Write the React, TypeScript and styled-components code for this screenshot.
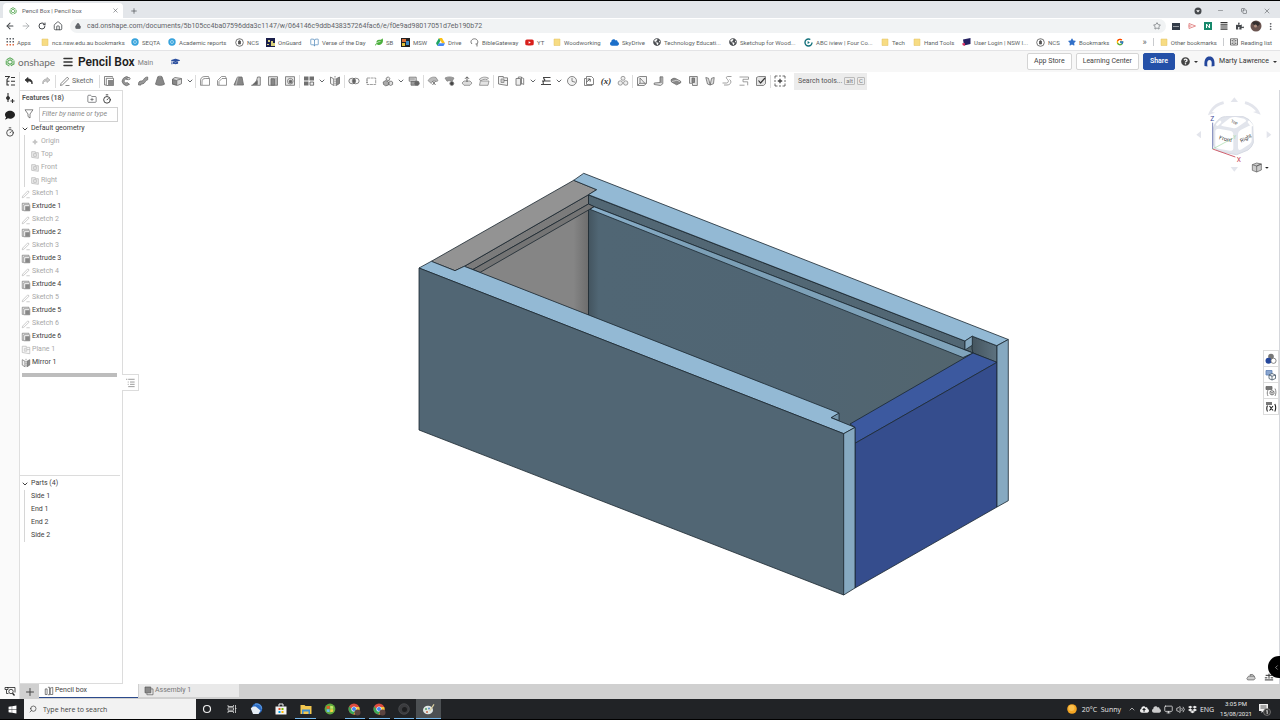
import React from "react";
import styled, { createGlobalStyle, css } from "styled-components";
import {
  ArrowLeft,
  ArrowRight,
  RotateCw,
  House,
  Lock,
  Star,
  EllipsisVertical,
  Plus,
  X,
  Minus,
  Copy,
  Search,
  ChevronDown,
  ChevronLeft,
  ChevronUp,
  Timer,
  FolderPlus,
  Menu,
  Monitor,
  Volume2,
  BookOpen,
} from "lucide-react";
import {
  FaWindows,
  FaDropbox,
  FaCloud,
  FaCloudUploadAlt,
  FaPuzzlePiece,
  FaGlobeAmericas,
  FaGraduationCap,
  FaStar,
  FaLeaf,
  FaQuestionCircle,
  FaYoutube,
  FaComment,
} from "react-icons/fa";
import { FcGoogle } from "react-icons/fc";

const ui = `Roboto, "Liberation Sans", sans-serif`;
const system = `"Open Sans", "Noto Sans", sans-serif`;

const Global = createGlobalStyle`
  *, *::before, *::after { box-sizing: border-box; }
  body { margin: 0; background: #fff; font-family: ${ui}; font-size: 7px; line-height: 9px; color: #333; }
  button, input { font: inherit; color: inherit; margin: 0; padding: 0; border: 0; background: none; }
  a { color: inherit; text-decoration: none; }
  ul { list-style: none; margin: 0; padding: 0; }
  h1, h2 { margin: 0; font-size: inherit; font-weight: inherit; }
  svg { display: block; flex: none; }
`;

const Page = styled.div`
  display: flex;
  flex-direction: column;
  min-height: 100vh;
  border-top: 1px solid #000;
`;

/* ---------- browser chrome ---------- */

const TabStrip = styled.div`
  display: flex;
  align-items: stretch;
  height: 17px;
  padding: 2px 2px 0 3px;
  background: #e3e6ea;
  font-size: 6px;
  color: #5f6368;
`;
const BrowserTab = styled.div`
  display: flex;
  align-items: center;
  gap: 5px;
  width: 120px;
  padding: 0 4px 0 6px;
  background: #fff;
  border-radius: 4px 4px 0 0;
  span { flex: 1; }
`;
const IconCell = styled.button<{ $w?: number; $c?: string }>`
  display: flex;
  flex: none;
  align-items: center;
  justify-content: center;
  width: ${(p) => p.$w ?? 16}px;
  color: ${(p) => p.$c ?? "#45484c"};
`;
const Spacer = styled.div`
  flex: 1;
`;
const AddressBar = styled.div`
  display: flex;
  align-items: stretch;
  height: 16px;
  padding: 0 4px 0 2px;
`;
const Omnibox = styled.label`
  display: flex;
  flex: 1;
  align-items: center;
  gap: 6px;
  margin: 1px 2px 1px 4px;
  padding: 0 5px;
  border-radius: 7px;
  background: #f1f3f4;
  color: #5f6368;
  input { flex: 1; outline: 0; }
`;
const Bookmarks = styled.nav`
  display: flex;
  align-items: center;
  height: 17px;
  padding: 0 8px 0 6px;
  border-bottom: 1px solid #e4e4e6;
  font-size: 6px;
  color: #5c5f63;
`;
const Bookmark = styled.a<{ $w?: number }>`
  display: flex;
  flex: none;
  align-items: center;
  gap: 3px;
  width: ${(p) => (p.$w ? p.$w + "px" : "auto")};
  white-space: nowrap;
`;
const More = styled.button`
  font-size: 9px;
`;
const Thin = styled.i`
  width: 1px;
  height: 8px;
  margin: 0 6px;
  background: #c9cbce;
`;

/* ---------- application header ---------- */

const Header = styled.header`
  display: flex;
  align-items: center;
  height: 21px;
  padding: 0 3px 0 5px;
  background: #f7f7f7;
`;
const Brand = styled.a`
  display: flex;
  align-items: center;
  gap: 3px;
  width: 57px;
  font: 10px/12px Lato, sans-serif;
  color: #6a6a6a;
`;
const DocTitle = styled.h1`
  margin-left: 5px;
  font-size: 12px;
  line-height: 14px;
  font-weight: 600;
  color: #1d1d1d;
`;
const Branch = styled.span`
  margin: 3px 18px 0 3px;
  color: #808080;
`;
const HeaderButton = styled.button<{ $primary?: boolean }>`
  height: 17px;
  margin-right: 4px;
  padding: 0 6px;
  border: 1px solid #d4d4d4;
  border-radius: 2px;
  background: #fff;
  color: #444;
  ${(p) =>
    p.$primary &&
    css`
      border-color: #2450a8;
      background: #2450a8;
      color: #fff;
      font-weight: 600;
    `}
`;
const MenuButton = styled.button`
  display: flex;
  align-items: center;
  gap: 4px;
  margin-left: 2px;
  & + & { margin-left: 6px; }
`;
const Caret = styled.i`
  border: 2px solid transparent;
  border-top-color: #333;
  border-bottom: 0;
`;

/* ---------- workspace ---------- */

const Workspace = styled.div`
  display: flex;
  flex: 1;
`;
const Rail = styled.nav`
  display: flex;
  flex-direction: column;
  width: 20px;
  border-right: 1px solid #dfdfdf;
  background: #fafafa;
  button { height: 17px; }
`;
const Stage = styled.div`
  display: flex;
  flex: 1;
  flex-direction: column;
  min-width: 0;
`;
const Toolbar = styled.div`
  display: flex;
  align-items: center;
  height: 18px;
  button { height: 17px; }
`;
const Sep = styled.i`
  width: 2px;
  height: 13px;
  border-right: 1px solid #dcdcdc;
`;
const SketchButton = styled.button`
  display: flex;
  align-items: center;
  gap: 1px;
  width: 42px;
  padding-left: 3px;
  color: #666;
`;
const ToolSearch = styled.button`
  display: flex;
  align-items: center;
  gap: 2px;
  margin-left: 6px;
  padding: 0 2px 0 4px;
  background: #ececec;
  color: #555;
  kbd {
    padding: 0 1px;
    border: 1px solid #bbb;
    border-radius: 1px;
    font: 6px/6px ${ui};
    color: #777;
  }
`;
const Middle = styled.div`
  display: flex;
  flex: 1;
`;
const Panel = styled.aside`
  display: flex;
  flex-direction: column;
  width: 103px;
  border: 1px solid #dcdcdc;
  border-left: 0;
`;
const PanelHead = styled.div`
  display: flex;
  align-items: center;
  height: 15px;
  padding: 0 8px 0 2px;
  h2 { flex: 1; font-weight: 600; color: #555; }
`;
const Filter = styled.label`
  display: flex;
  align-items: center;
  gap: 4px;
  height: 16px;
  padding: 0 4px 0 3px;
  input {
    flex: 1;
    min-width: 0;
    height: 15px;
    padding: 0 2px;
    border: 1px solid #d0d0d0;
    font-style: italic;
  }
  input::placeholder { color: #8c8c8c; opacity: 1; }
`;
const Tree = styled.ul<{ $nested?: boolean }>`
  ${(p) =>
    p.$nested &&
    css`
      margin-left: 4px;
      border-left: 1px solid #d6d6d6;
    `}
`;
const Row = styled.button<{ $dim?: boolean; $indent?: number; $gap?: number }>`
  display: flex;
  align-items: center;
  gap: ${(p) => p.$gap ?? 2}px;
  width: 100%;
  height: 13px;
  padding-left: ${(p) => p.$indent ?? 1}px;
  color: ${(p) => (p.$dim ? "#a8a8a8" : "#404040")};
`;
const Rollback = styled.div`
  height: 4px;
  margin: 4px 5px 0 2px;
  background: #bdbdbd;
`;
const PartsSection = styled.section`
  height: 208px;
  padding-top: 1px;
  margin-right: 2px;
  border-top: 1px solid #dcdcdc;
`;
const Canvas = styled.main`
  position: relative;
  display: flex;
  flex: 1;
  border-right: 1px solid #d5d7dc;
`;
const Model = styled.svg`
  flex: 1;
  min-width: 0;
  width: 100%;
`;
const ListToggle = styled.button`
  position: absolute;
  top: 284px;
  left: -1px;
  display: flex;
  align-items: center;
  justify-content: center;
  width: 17px;
  height: 17px;
  border: 1px solid #dcdcdc;
  border-left: 0;
  background: #fff;
`;
const CubeHolder = styled.div`
  position: absolute;
  top: 0;
  right: -1px;
`;
const SideTabs = styled.div`
  position: absolute;
  top: 260px;
  right: 0;
  display: flex;
  flex-direction: column;
  button {
    width: 16px;
    height: 16px;
    border: 1px solid #dcdcdc;
    border-bottom: 0;
  }
  button:last-child { height: 17px; border-bottom: 1px solid #dcdcdc; }
`;
const Measures = styled.div`
  position: absolute;
  right: 5px;
  bottom: 2px;
  display: flex;
  gap: 8px;
`;
const Drawer = styled.button`
  position: absolute;
  right: -1px;
  bottom: 6px;
  width: 12px;
  height: 22px;
  border-radius: 11px 0 0 11px;
  background: #000;
  color: #ddd;
  display: flex;
  align-items: center;
  justify-content: flex-end;
`;
const SheetTabs = styled.div`
  display: flex;
  height: 15px;
  background: #d0d0d0;
`;
const SheetTab = styled.button<{ $active?: boolean; $w: number }>`
  display: flex;
  align-items: center;
  gap: 1px;
  width: ${(p) => p.$w}px;
  height: 14px;
  padding-left: 5px;
  margin-right: 1px;
  background: ${(p) => (p.$active ? "#fff" : "#e9e9e9")};
  border-bottom: 1px solid ${(p) => (p.$active ? "#2b4a8c" : "#d0d0d0")};
  color: ${(p) => (p.$active ? "#444" : "#777")};
`;

/* ---------- taskbar ---------- */

const Taskbar = styled.footer`
  display: flex;
  height: 21px;
  border-bottom: 1px solid #000;
  background: #212326;
  color: #e8e8e8;
  font-family: ${system};
`;
const TaskSearch = styled.label`
  display: flex;
  align-items: center;
  gap: 6px;
  width: 172px;
  margin-right: -1px;
  padding-left: 5px;
  background: #f2f2f2;
  color: #333;
  input { flex: 1; min-width: 0; }
  input::placeholder { color: #444; opacity: 1; }
`;
const MirroredSearch = styled(Search)`
  transform: scaleX(-1);
`;
const Apps = styled.div`
  display: flex;
  width: 246px;
`;
const AppButton = styled.button<{ $open?: boolean; $active?: boolean }>`
  display: flex;
  flex: 1;
  align-items: center;
  justify-content: center;
  background: ${(p) => (p.$active ? "#4c5053" : "none")};
  box-shadow: ${(p) =>
    p.$active
      ? "inset 0 -1px #76b9ed"
      : p.$open
        ? "inset 2px 0 #212326, inset -2px 0 #212326, inset 0 -1px #76b9ed"
        : "none"};
`;
const Weather = styled.button`
  display: flex;
  align-items: center;
  gap: 5px;
  margin-right: 5px;
  white-space: pre;
`;
const Clock = styled.time`
  width: 40px;
  align-self: center;
  font: 6px/10px ${ui};
  text-align: center;
`;

/* ---------- drawings ---------- */

type P = { children: React.ReactNode; s?: number; c?: string };
const G = ({ children, s = 12, c = "#6a6a6a" }: P) => (
  <svg width={s} height={s} viewBox="0 0 12 12" fill="none" stroke={c} strokeWidth=".8" strokeLinejoin="round" aria-hidden>
    {children}
  </svg>
);

const I = {
  undo: <G c="#333"><path d="M5 2.500 2 5l3 2.500V6c2.500-.2 3.700.6 4 3 .8-3-.8-5-4-5z" fill="#333" /></G>,
  redo: <G c="#aaa"><path d="M7 2.500 10 5 7 7.500V6c-2.500-.2-3.700.6-4 3-.8-3 .8-5 4-5z" fill="#ccc" /></G>,
  pencil: <G><path d="M2 8.500 8.200 2.200l1.600 1.500L3.500 9.800 1.500 10.500zM6.500 10.500h4" /></G>,
  extrude: <G><path d="M9.500 2.500V1.500h-8v8.500H3" /><path d="M3.300 3.300h7.200v7.200H3.300z" fill="#fff" /><path d="M5 5h5.500v5.500H5z" fill="#888" stroke="none" /></G>,
  revolve: <G><path d="M9.500 3A4.300 4.300 0 1 0 9.500 9.300L7.200 7.500A1.900 1.900 0 1 1 7.200 4.600z" fill="#999" /><ellipse cx="8.500" cy="3.700" rx="1.700" ry="1" fill="#e4e4e4" /></G>,
  sweep: <G><path d="M1.500 10c0-3 .5-4 3-4s2-4 6.200-4v2.800C8 4.800 8.500 9 5 9 4 9 4 9 4 10z" fill="#999" /></G>,
  loft: <G><path d="M3.800 1.800h4.200l2.500 7.400c-2 1.500-7 1.500-9 0z" fill="#888" /><ellipse cx="6" cy="2" rx="2" ry=".8" fill="#e4e4e4" /></G>,
  thicken: <G><path d="M1.500 4 4 2.500l6.500 1v5.200L6.500 10.500l-5-1.300z" fill="#ddd" /><path d="M1.500 4.500 5.800 5.500v4.500l-4.300-1z" fill="#888" /><path d="m6 5.200 4.500-1.400" /></G>,
  fillet: <G><path d="M1.500 10.300V6c0-3 1.500-4.500 4.500-4.500h3.500L10.500 4v6.300zM3 10V7c0-2.300 1-3.500 3.300-3.500h4" strokeWidth=".7" /></G>,
  chamfer: <G><path d="M1.500 10.300V5.500l4-4h4l1 2.500v6.300zM3 10V6.500l3-3h4.400" strokeWidth=".7" /></G>,
  draft: <G><path d="m1 10 3.500-8H9l1.500 8z" fill="#888" /><path d="M5 2 3 10" stroke="#ccc" /></G>,
  rib: <G><path d="M7.500 2h2.800v8.300H1.500c3-.8 5-3.300 6-8.300z" fill="#ddd" /><path d="m3 9.500 4.300-4v4z" fill="#666" /></G>,
  shell: <G><path d="M1.500 1.700h9v8.600h-9z" fill="#e8e8e8" /><path d="M4 3.700h3.500v6.500H4z" fill="#888" /><path d="M9 3v7" /></G>,
  hole: <G><path d="M1.500 1.700h9v8.600h-9z" fill="#e8e8e8" /><circle cx="6.300" cy="6.200" r="2.800" fill="#fff" /><circle cx="6.500" cy="6.500" r="1.500" fill="#666" /></G>,
  pattern: <G c="#555"><path d="M1 1.500h4.500v4H1zM6.500 1.500H11v4H6.500zM1 6.500h4.500v4H1z" fill="#707070" stroke="none" /><path d="M7 7h3.600v3.200H7z" fill="#eee" /></G>,
  mirror: <G><path d="m1.500 2 3.200 1.800v6.700L1.500 8.500z" fill="#f2f2f2" /><path d="M6 1v10" strokeDasharray="1.500 .8" /><path d="M7.300 3.800 10.500 2v6.500l-3.200 2z" fill="#888" /></G>,
  boolean: <G><ellipse cx="4.300" cy="6" rx="3.500" ry="2.800" fill="#eee" /><ellipse cx="7.700" cy="6" rx="3.500" ry="2.800" /><path d="M6 3.700c1.300 1 1.300 3.600 0 4.600-1.300-1-1.300-3.600 0-4.600z" fill="#444" /></G>,
  split: <G><path d="M2 3h8.700v6.500H2zM1 5h2M1 7.500h2" strokeDasharray="3 .6" stroke="#888" /></G>,
  transform: <G><path d="m4 3.300 2.300-1.500 1.500 1.500L7 5.800 4.500 5z" fill="#eee" /><path d="m1.200 7 2.600-1.500L6.500 7v3L3.700 10.800 1.500 9.500z" fill="#aaa" /><path d="m7 7 2-1 1.600 1v2.500L8.500 10.500 7 9.500z" fill="#ddd" /></G>,
  remove: <G><path d="M1.200 2.200h7v4h-7z" fill="#e4e4e4" /><path d="M1.500 4h5.300M3 6.500h5v3.700H3z" fill="#999" /><circle cx="9" cy="8.300" r="2.200" fill="#666" /></G>,
  faceMod: <G c="#888"><path d="M1 5.500C3 2.500 6 1.500 9 2.500l2 3.300-2 .7C7 4.800 5.500 6 4.300 8.500z" fill="#bbb" /><path d="m5.500 6 3 4M8.500 6l-3 4" stroke="#555" /></G>,
  faceDel: <G c="#888"><path d="M1 3c3-1.500 6-1.500 9 0L8 6.500c-2-1-3.500-1-5-.3z" fill="#999" /><circle cx="7.800" cy="8.500" r="2" fill="#444" /></G>,
  faceMove: <G c="#888"><path d="m1 8 2-2h6l2 2-2 2.300H3z" fill="#ddd" /><path d="M6 7V2M4 3.800 6 1.800l2 2" stroke="#444" /></G>,
  faceReplace: <G c="#888"><path d="M1.200 4.500C3.500 2 7 1.500 10.500 3L9 4.700c-2-.8-4-.5-6 1zM2.500 5.500l-1 4.800h8.500l1-4.300H3" fill="#e4e4e4" /></G>,
  plane: <G><path d="M1.500 1.500h4.800v1.300h4.200v7.700L1.500 9z" fill="#f2f2f2" /><path d="M4 4h3v3.500H4z" fill="#ccc" stroke="#888" /><path d="M7 5.500h3.500" /></G>,
  offset: <G><path d="M2 3.500h4.500v6.700H2z" fill="#eee" /><path d="M4.300 3.300V2h3.200v7.500M7.500 2.500l2.200 1v6L7.800 8.500" /></G>,
  curve: <G c="#444"><path d="M3 2.500h7.500M2 6h8.500M1 9.500h10M4.500 2.500C2 4 6.500 4.500 4 6s.5 2.500-1 3.500" strokeWidth="1.100" /></G>,
  clock: <G><circle cx="6" cy="6" r="4.500" fill="#f2f2f2" /><path d="M6 3v3.300l3.500 1" /></G>,
  import: <G><path d="M3 3.500H1.500v7H9v-1.200M3.500 1.500h5l2 2v6h-7z" /><path d="m3.500 7 3.300-2.700M4.500 4h2.700v2.700" stroke="#333" /></G>,
  balls: <G c="#888"><circle cx="6" cy="3.300" r="2" fill="#eee" /><circle cx="3.300" cy="8" r="2.200" fill="#eee" /><circle cx="8.700" cy="8" r="2.200" fill="#eee" /></G>,
  sheet: <G><path d="M1.500 2.500 4 1.500h6.500v7L8 10.500H1.500z" fill="#f2f2f2" /><path d="m4 3 5 5.500M4 3v5l-2 2M4 8.300h6" /></G>,
  flange: <G><path d="M7 1.800h2.800v7L7.500 10.500 1.200 9.500V8L7 7.500z" fill="#ddd" /><path d="M8 2v6" stroke="#555" /></G>,
  hem: <G><path d="M1 4.800c2-2 4-2 6-.5l3.700 2v1.500l-4 2L1.500 7z" fill="#888" /><path d="m2 6.500 5-1.300 3 1.500" stroke="#ddd" /></G>,
  tab: <G><path d="M2.500 1.500h7.800v9H5.500V8.300H2.500z" fill="#e4e4e4" /><path d="M5 3h2.500v4.500H5z" fill="#888" /></G>,
  bend: <G><path d="m1.800 2.500 2.700.8L6.200 10 3.500 9zM10.200 2.500l-2.700.8L6.200 10 9.500 8.700z" fill="#ddd" /></G>,
  relief: <G c="#888"><path d="M10.500 1.500H6.700C5 1.500 5 3.300 6.500 4.500S7.500 8 5.500 8H1.500M3 10h3c4 0 5-4 2.500-5.500" /></G>,
  joint: <G c="#888"><path d="M1.500 2h9v2.300H5v2.500h4.700v3.500M1.500 10.200h5" /></G>,
  finish: <G><path d="M1.500 2.500 3.500 1.500h7v7.200l-2 1.800h-7z" fill="#e4e4e4" /><path d="m3.500 5.500 2 2.500 4.500-5" stroke="#333" strokeWidth="1.200" /></G>,
  addTool: <G c="#444"><path d="M1 3.500V1h2.500M5 1h2M8.500 1H11v2.500M11 5v2M11 8.500V11H8.500M7 11H5M3.500 11H1V8.500M1 7V5" /><path d="M6 3.800v4.400M3.800 6h4.400" strokeWidth="1.300" /></G>,
  tree: <G c="#333"><path d="M1 1.500h4.500L3 4.500v5.500h2M3 6.200h2.500M7 2.500h4M7 6.200h4M7 10h4" strokeWidth="1.100" /></G>,
  insert: <G c="#333"><path d="M4 1v9M8.500 7v4M6.500 9h4" strokeWidth="1.100" /><circle cx="4" cy="6" r="1.600" fill="#333" /></G>,
  zoomTree: <G c="#222"><path d="M1 2.500h3v2H1zM3 2.500h8v5M2.500 5v3.500h2" /><circle cx="7" cy="6.500" r="2.200" /><path d="m8.500 8.200 2 2.300" strokeWidth="1.300" /></G>,
  studio: <G c="#444"><path d="M1.500 3.500h2.200v6.700H1.500zM4.700 1.500h2v9h-2M7.500 2.500l3-.8v8.500h-3z" /></G>,
  assembly: <G c="#555"><path d="M1.200 1.200h7v7h-7z" fill="#888" /><path d="M3.500 8.500v2h7.300v-7H8.500" /></G>,
  origin: <G c="#bbb"><circle cx="6" cy="6" r="1.400" fill="#ddd" /><path d="M6 3v6M3 6h6" strokeWidth=".5" /></G>,
  list: <G c="#777"><path d="M3.500 2.500h7M5.500 5.500h5M5.500 8h5M3.500 10.500h7M1.200 2.500h1.300M3 5.500h1M3 8h1" /></G>,
  funnel: <G c="#666"><path d="M2 1.800h8L7 6v4L5 8.500V6z" /></G>,
};

const OnshapeMark = ({ s = 11 }: { s?: number }) => (
  <svg width={s} height={s} viewBox="0 0 24 24" fill="none" stroke="#5aa957" strokeWidth="2.600" aria-hidden>
    <path d="M4 6.500 12 2l8 4.500M21.500 8.500v8L14 21M10.500 22 3 17V8.500" />
    <path d="m12 6.800 5 2.800v5.200l-5 2.700-5-2.700V9.600z" />
  </svg>
);
const Folder = () => (
  <svg width="8" height="8" viewBox="0 0 8 8" aria-hidden><path d="M1 1h6v6.500H1z" fill="#f7dc83" stroke="#e0c060" strokeWidth=".5" /></svg>
);
const Dot = () => (
  <svg width="8" height="8" viewBox="0 0 8 8" fill="none" stroke="#c9e8f7" aria-hidden>
    <circle cx="4" cy="4" r="3.700" fill="#38a3dc" stroke="none" />
    <circle cx="4" cy="4" r="1.500" strokeWidth=".7" />
  </svg>
);
const Ncs = () => (
  <svg width="9" height="9" viewBox="0 0 9 9" fill="none" stroke="#555" strokeWidth=".8" aria-hidden>
    <circle cx="4.500" cy="4.500" r="3.800" /><path d="M3.500 6V3.200l1-.9 1 .9V6z" fill="#555" />
  </svg>
);
const bmIcon = {
  apps: (
    <svg width="8" height="8" viewBox="0 0 8 8" aria-hidden>
      {[0, 3, 6].map((y) => [0, 3, 6].map((x) => <rect key={`${x}${y}`} x={x + 0.5} y={y} width="1.500" height="1.500" fill={y === 6 ? "#d9663f" : "#5f6368"} />))}
    </svg>
  ),
  onguard: (
    <svg width="9" height="9" viewBox="0 0 9 9" aria-hidden><path d="M0 0h9v9H0z" fill="#1b1f4b" /><path d="M2 2h2v2H2zM5 3h2v2h2v3H5zM1 6h2v1H1z" fill="#d8cf7a" /></svg>
  ),
  msw: (
    <svg width="9" height="9" viewBox="0 0 9 9" aria-hidden><path d="M0 0h9v9H0z" fill="#222" /><path d="M1 1h4v3H1z" fill="#d9703a" /><path d="M5 3h3v4H5z" fill="#3b8ac4" /><path d="M1 5h3v3H1z" fill="#e0c13a" /></svg>
  ),
  drive: (
    <svg width="9" height="8" viewBox="0 0 9 8" aria-hidden><path d="M3 0 0 5.200 1.500 8 4.600 2.600z" fill="#1fa463" /><path d="M3 0h3l3 5.200H6z" fill="#fbc116" /><path d="M1.500 8 3 5.200h6L7.500 8z" fill="#4688f4" /></svg>
  ),
  bible: (
    <svg width="9" height="9" viewBox="0 0 9 9" fill="none" stroke="#777" aria-hidden><path d="M2 6C-.5 3.500 2 .8 4.500.8S9 3.500 7 6v2.500M5.500 6H7" /></svg>
  ),
  abc: (
    <svg width="9" height="9" viewBox="0 0 9 9" fill="none" aria-hidden><circle cx="4.500" cy="4.500" r="3.500" stroke="#12707a" strokeWidth="1.400" strokeDasharray="18 4" /><path d="m3.600 3 2.300 1.500L3.600 6z" fill="#12707a" /></svg>
  ),
  login: (
    <svg width="9" height="8" viewBox="0 0 9 8" aria-hidden><path d="M1 1.500 8.500 0v6L2 7.500z" fill="#262262" /><path d="M0 5.500 3 5v2.500H1z" fill="#d6275b" /></svg>
  ),
};

const bookmarks: [React.ReactNode, string, number][] = [
  [bmIcon.apps, "Apps", 35],
  [<Folder />, "ncs.nsw.edu.au bookmarks", 90],
  [<Dot />, "SEQTA", 37],
  [<Dot />, "Academic reports", 67],
  [<Ncs />, "NCS", 31],
  [bmIcon.onguard, "OnGuard", 44],
  [<BookOpen size={9} color="#5b8fbe" />, "Verse of the Day", 65],
  [<FaLeaf size={8} color="#4caf3c" />, "SB", 26],
  [bmIcon.msw, "MSW", 35],
  [bmIcon.drive, "Drive", 34],
  [bmIcon.bible, "BibleGateway", 55],
  [<FaYoutube size={9} color="#d8201c" />, "YT", 28],
  [<Folder />, "Woodworking", 57],
  [<FaCloud size={9} color="#1c6fc9" />, "SkyDrive", 43],
  [<FaGlobeAmericas size={8} color="#4c4f53" />, "Technology Educati...", 76],
  [<FaGlobeAmericas size={8} color="#4c4f53" />, "Sketchup for Wood...", 75],
  [bmIcon.abc, "ABC iview | Four Co...", 77],
  [<Folder />, "Tech", 32],
  [<Folder />, "Hand Tools", 49],
  [bmIcon.login, "User Login | NSW I...", 74],
  [<Ncs />, "NCS", 32],
  [<FaStar size={8} color="#3270c8" />, "Bookmarks", 48],
  [<FcGoogle size={8} />, "", 8],
];

const toolbar: (keyof typeof I | "|" | "v")[] = [
  "extrude", "revolve", "sweep", "loft", "thicken", "v", "|",
  "fillet", "chamfer", "draft", "rib", "shell", "hole", "|",
  "pattern", "v", "mirror", "|",
  "boolean", "split", "transform", "v", "remove", "|",
  "faceMod", "faceDel", "faceMove", "faceReplace", "|",
  "plane", "offset", "v", "curve", "v", "clock", "import",
];
const toolbarEnd: (keyof typeof I | "|" | "v")[] = [
  "balls", "|", "sheet", "flange", "hem", "tab", "bend", "relief", "joint", "finish", "|", "addTool",
];

const VarIcon = () => (
  <svg width="12" height="12" viewBox="0 0 12 12" aria-hidden>
    <text x="6" y="9" textAnchor="middle" fontFamily="Liberation Serif, serif" fontStyle="italic" fontWeight="700" fontSize="9" fill="#333">(x)</text>
  </svg>
);

const Tools = ({ items }: { items: typeof toolbar }) => (
  <>
    {items.map((t, i) =>
      t === "|" ? (
        <Sep key={i} />
      ) : t === "v" ? (
        <IconCell key={i} $w={9} aria-label="More tools"><ChevronDown size={8} strokeWidth={2.5} /></IconCell>
      ) : (
        <IconCell key={i} $w={17} aria-label={t}>{I[t]}</IconCell>
      )
    )}
  </>
);

const features: [keyof typeof I, string, boolean][] = [
  ...[1, 2, 3, 4, 5, 6].flatMap((n): [keyof typeof I, string, boolean][] => [
    ["pencil", `Sketch ${n}`, true],
    ["extrude", `Extrude ${n}`, false],
  ]),
  ["plane", "Plane 1", true],
  ["mirror", "Mirror 1", false],
];

const Faded = styled.span<{ $on: boolean }>`
  opacity: ${(p) => (p.$on ? 0.5 : 1)};
`;

const BoxModel = () => (
  <Model viewBox="123 90 1156 594" role="img" aria-label="Pencil box model">
    <defs>
      <linearGradient id="wall" x1="0" x2="1">
        <stop offset="0" stopColor="#43545f" />
        <stop offset=".025" stopColor="#506674" />
        <stop offset=".5" stopColor="#506573" />
        <stop offset="1" stopColor="#53656d" />
      </linearGradient>
      <linearGradient id="endWall" x1="0" x2="1">
        <stop offset=".88" stopColor="#858585" />
        <stop offset="1" stopColor="#6d6d6d" />
      </linearGradient>
      <linearGradient id="ledge" x1="0" x2="1">
        <stop offset="0" stopColor="#8ab0cb" />
        <stop offset=".3" stopColor="#7c9fb6" />
        <stop offset="1" stopColor="#80a4bb" />
      </linearGradient>
      <linearGradient id="rebate" x1="0" x2="1">
        <stop offset="0" stopColor="#45555f" />
        <stop offset="1" stopColor="#5d7280" />
      </linearGradient>
    </defs>
    <g stroke="#1b2730" strokeWidth=".8" strokeLinejoin="round">
      <path d="M588.500 195 997 354 850 430 588.500 316z" fill="url(#wall)" />
      <path d="M588.500 195 965 341v9l8 3L594 206.700l-5.500-2.700z" fill="#526774" />
      <path d="M594 206.700 973 353l-10 4.500L590 209.300z" fill="url(#ledge)" />
      <path d="M588.500 194.700V316L464 266.500z" fill="url(#endWall)" />
      <path d="M588.500 194.700v9.300L473 269.500l-9-3z" fill="#7b7b7b" />
      <path d="M588.500 204l5.500 2.500-5.500 3.500L480 272.500l-7-3z" fill="#747474" />
      <path d="m573.700 180.300 23 9.400-8.200 5L464.300 266.300 455 270.700l-23.700-9.400z" fill="#939393" />
      <path d="m972.300 336.300 24.700 9.500v16.700L973 353l-1-4z" fill="url(#rebate)" />
      <path d="m583.700 173.300 424.600 166.200-11.500 6.200-24.500-9.500-7.300 4.800-376.500-146.300 8.200-5-23-9.400z" fill="#93b9d4" />
      <path d="m965 341 7.300-4.800v9L965 350z" fill="#86a9c0" />
      <path d="m850 424 123-71 24 9.300-142 81-.200-16z" fill="#3c599f" />
      <path d="m855 443.300 142-81V507L855 588z" fill="#354d8d" />
      <path d="m997 345.700 11.300-6.200v161.200L997 507z" fill="#86a9c1" />
      <path d="m831 417.500 8-4.500v7.700z" fill="#7595aa" />
      <path d="m419 268 12.300-6.700 23.700 9.400 9.300-4.400L839 413l-8 4.700 24 9.700-11.300 6.300z" fill="#93b9d4" />
      <path d="m419 268 424.700 165.700V595L419 430z" fill="#516674" />
      <path d="m843.700 433.700 11.300-6.300V588l-11.300 7z" fill="#86a9c1" />
    </g>
  </Model>
);

const ViewCube = () => (
  <svg width="100" height="100" viewBox="0 0 300 300" fill="none" role="img" aria-label="View cube">
    <g fill="#e3e5ec">
      <path d="m163 22 11 14h-22zM163 245l11-14h-22zM49 134l14-11v22zM274 134l-14-11v22z" />
      <path d="M84 76c6-22 24-38 46-42l2 8c-16 4-28 12-36 24l9 2zM242 74c-6-20-24-34-46-40l-2 8c16 4 26 12 34 22l-9 2z" />
    </g>
    <path d="M122 84q6-4 14-4h54q20 6 28 24l2 54q-4 14-16 22l-34 14-54-10q-14-6-16-22V120q0-20 22-36z" fill="#e2e5ec" stroke="#d6dae3" strokeWidth="3" />
    <path d="m124 104 26-20q8-4 18-3l24 5q8 4 6 8l-26 18q-6 4-14 2l-28-5q-8-2-6-5zM106 122q2-6 10-6l34 6q10 2 10 12v40q0 10-10 8l-34-6q-10-2-10-10zM174 132q0-8 8-12l24-12q8-4 9 4v38q0 8-6 12l-24 16q-10 6-11-4z" fill="#fff" />
    <path d="m112 104 8-8M207 96l8 10M106 182l8 8" stroke="#fff" strokeWidth="8" strokeLinecap="round" />
    <path d="M98 98v79" stroke="#7b84b8" strokeWidth="3" />
    <path d="m98 177 68 24" stroke="#d0606e" strokeWidth="3" />
    <path d="m98 177 62-33" stroke="#a4dba6" strokeWidth="2" />
    <g fontFamily="Roboto, sans-serif" fill="#444">
      <text x="91" y="93" fontSize="20" fill="#3a4a9a">Z</text>
      <text x="170" y="215" fontSize="20" fill="#c63a4c">X</text>
      <text x="160" y="146" fontSize="14" fill="#a4dba6">Y</text>
      <text fontSize="17" transform="translate(116 148) rotate(13)">Front</text>
      <text fontSize="16" transform="translate(184 158) rotate(-28)">Right</text>
      <text fontSize="12" transform="translate(152 97) rotate(18)">Top</text>
    </g>
    <path d="m217 224 13-5 14 3v18l-14 6-13-5z" fill="#ccc" stroke="#555" strokeWidth="2" />
    <path d="m217 224 13 4 14-6-14 6v18" fill="none" stroke="#555" strokeWidth="2" />
    <path d="M255 231h11l-5 5z" fill="#222" />
  </svg>
);

const ChromeMark = () => (
  <svg width="13" height="13" viewBox="0 0 13 13" aria-hidden>
    <circle cx="6" cy="6" r="5.500" fill="#dd4b3e" />
    <path d="M1.200 3.300A5.500 5.500 0 0 0 5.500 11.500L7.500 8 4 7z" fill="#3aa757" />
    <path d="M11.200 4A5.500 5.500 0 0 1 5.500 11.500L8.500 6.500 7 4z" fill="#f5c33b" />
    <circle cx="6" cy="6" r="2.600" fill="#fff" /><circle cx="6" cy="6" r="2" fill="#4285f4" />
    <circle cx="9.500" cy="9.500" r="3" fill="#5b4440" />
  </svg>
);

const taskApps: [string, React.ReactNode, boolean?, boolean?][] = [
  ["Cortana", <svg width="10" height="10" viewBox="0 0 10 10"><circle cx="5" cy="5" r="3.500" fill="none" stroke="#eee" strokeWidth="1.200" /></svg>],
  ["Task view", <svg width="10" height="10" viewBox="0 0 10 10" fill="none" stroke="#ddd"><path d="M1 1v1.500h5.500V1M1 9V7.500h5.500V9M1 3.800h5.500v2.400H1zM8.500 1v8M8 4.500h1.500" strokeWidth=".8" /></svg>],
  ["Mail", <svg width="13" height="12" viewBox="0 0 13 12"><circle cx="7" cy="5.500" r="5.300" fill="#2b6cc4" /><path d="M.8 5.500c1.500-2 4-2.500 5.500-1.500l4.200 3.500-2 3.500H3z" fill="#e6edf5" /><path d="M5 1.200c4-1 6.500 1.800 6.500 4.300" stroke="#6fa8e6" fill="none" /></svg>],
  ["Store", <svg width="12" height="12" viewBox="0 0 12 12"><path d="M.5 3.500h11v8H.5z" fill="#f3f3f3" /><path d="M4 3.500V1h4v2.500" stroke="#f3f3f3" fill="none" /><path d="M3.500 5h2v2h-2z" fill="#e5532d" /><path d="M6.500 5h2v2h-2z" fill="#7fba00" /><path d="M3.500 8h2v2h-2z" fill="#00a4ef" /><path d="M6.500 8h2v2h-2z" fill="#ffb900" /></svg>],
  ["File Explorer", <svg width="12" height="11" viewBox="0 0 12 11"><path d="M.5 1h4l1 1h6v8H.5z" fill="#f3c74f" /><path d="M2 5.500h8V10H8.500V7.500h-5V10H2z" fill="#3f8fd0" /></svg>, true],
  ["Media Center", <svg width="12" height="12" viewBox="0 0 12 12"><circle cx="6" cy="6" r="5.400" fill="#5fa83c" /><path d="M2.700 3.200 5.600 2.700v3H2.700z" fill="#e8562b" /><path d="M6.200 2.700l3 .5v2.500h-3z" fill="#c6e86a" /><path d="M2.700 6.300h2.900v3l-2.900-.500z" fill="#6fc0ee" /><path d="M6.200 6.300h3v2.500l-3 .5z" fill="#f6d14a" /></svg>],
  ["Chrome", <ChromeMark />, true],
  ["Chrome, second profile", <ChromeMark />, true],
  ["OBS", <svg width="12" height="12" viewBox="0 0 12 12"><circle cx="6" cy="6" r="5.300" fill="#3a3b3e" stroke="#55575a" strokeWidth=".6" /><circle cx="6.500" cy="6.500" r="2.500" fill="#1d1e20" /></svg>, true],
  ["Paint", <svg width="13" height="12" viewBox="0 0 13 12"><ellipse cx="6" cy="7" rx="5" ry="4.300" fill="#dfe6e4" /><circle cx="4" cy="6" r="1" fill="#58a06b" /><circle cx="7" cy="5.500" r="1" fill="#5a8fc8" /><circle cx="5" cy="9" r="1" fill="#c4694d" /><path d="m7 8 4.500-7 1 .700L8 8.500z" fill="#dcd0a0" /></svg>, true, true],
];

const Cell = ({ label, w, c, children }: { label: string; w?: number; c?: string; children: React.ReactNode }) => (
  <IconCell $w={w} $c={c} aria-label={label}>{children}</IconCell>
);

const Browser = () => (
  <>
    <TabStrip>
      <BrowserTab>
        <OnshapeMark s={8} />
        <span>Pencil Box | Pencil box</span>
        <X size={7} />
      </BrowserTab>
      <Cell label="New tab" w={22}><Plus size={8} /></Cell>
      <Spacer />
      <Cell label="Search tabs" w={22}>
        <svg width="8" height="8" viewBox="0 0 8 8"><circle cx="4" cy="4" r="3.500" fill="#45484c" /><path d="M2.200 3.200h3.600L4 5.500z" fill="#fff" /></svg>
      </Cell>
      <Cell label="Minimise" w={23}><Minus size={7} strokeWidth={1.5} /></Cell>
      <Cell label="Restore" w={23}><Copy size={6} strokeWidth={2} /></Cell>
      <Cell label="Close" w={23}><X size={8} strokeWidth={1.5} /></Cell>
    </TabStrip>
    <AddressBar>
      <Cell label="Back"><ArrowLeft size={10} strokeWidth={2.5} /></Cell>
      <Cell label="Forward" c="#a5a8ab"><ArrowRight size={10} /></Cell>
      <Cell label="Reload"><RotateCw size={8} strokeWidth={3} /></Cell>
      <Cell label="Home"><House size={10} /></Cell>
      <Omnibox>
        <Lock size={6} strokeWidth={3} fill="#5f6368" />
        <input aria-label="Address" defaultValue="cad.onshape.com/documents/5b105cc4ba07596dda3c1147/w/064146c9ddb438357264fac6/e/f0e9ad98017051d7eb190b72" />
        <Star size={8} />
      </Omnibox>
      <Cell label="Passwords"><svg width="8" height="7" viewBox="0 0 8 7"><path d="M0 0h8v7H0z" fill="#333c48" /><path d="M1.500 3h1v1h-1zM3.500 3h1v1h-1zM5.500 3h1v1h-1z" fill="#fff" /></svg></Cell>
      <Cell label="Screen recorder"><svg width="8" height="8" viewBox="0 0 8 8" fill="none" stroke="#e08080"><path d="M1 1.500 7.500 4 1 6.500zM.500 4h3" strokeWidth=".9" /></svg></Cell>
      <Cell label="Notes"><svg width="8" height="8" viewBox="0 0 8 8" fill="none"><path d="M0 0h8v8H0z" fill="#17896c" /><path d="M2.500 6V2l3 4V2" stroke="#fff" /></svg></Cell>
      <Cell label="Reader"><svg width="8" height="8" viewBox="0 0 8 8"><path d="M.500 0h7v1.200h-7zM.500 2.200h7v1.200h-7zM.500 4.400h7v1.200h-7zM.500 6.600h7v1.200h-7z" fill="#333" /></svg></Cell>
      <Cell label="Extensions"><FaPuzzlePiece size={8} /></Cell>
      <Cell label="Profile"><svg width="12" height="12" viewBox="0 0 12 12"><circle cx="6" cy="6" r="5.500" fill="#6b5550" /><path d="M2 3c2-3 7-2 8 1L8 6 4 5z" fill="#35302f" /><circle cx="5.500" cy="6" r="1.500" fill="#b08f80" /></svg></Cell>
      <Cell label="Menu" w={12}><EllipsisVertical size={9} /></Cell>
    </AddressBar>
    <Bookmarks>
      {bookmarks.map(([icon, text, w], i) => (
        <Bookmark key={i} href="#" $w={w} aria-label={text || "Google"}>{icon}{text}</Bookmark>
      ))}
      <Spacer />
      <More aria-label="More bookmarks">»</More>
      <Thin />
      <Bookmark href="#"><Folder />Other bookmarks</Bookmark>
      <Thin />
      <Bookmark href="#">
        <svg width="8" height="8" viewBox="0 0 8 8" fill="none" stroke="#555" strokeWidth=".8"><path d="M.500.800h7v6.200h-7zM4 1v6M1.500 2.500h1.500M1.500 4h1.500M1.500 5.500h1.500M5 2.500h1.500M5 4h1.500M5 5.500h1.500" /></svg>
        Reading list
      </Bookmark>
    </Bookmarks>
  </>
);

export default function App() {
  return (
    <Page>
      <Global />
      <Browser />
      <Header>
        <Brand href="#"><OnshapeMark s={10} />onshape</Brand>
        <Cell label="Main menu" w={11}><Menu size={12} strokeWidth={3} color="#333" /></Cell>
        <DocTitle>Pencil Box</DocTitle>
        <Branch>Main</Branch>
        <FaGraduationCap size={9} color="#2c4f9e" />
        <Spacer />
        <HeaderButton>App Store</HeaderButton>
        <HeaderButton>Learning Center</HeaderButton>
        <HeaderButton $primary>Share</HeaderButton>
        <MenuButton aria-label="Help"><FaQuestionCircle size={9} color="#444" /><Caret /></MenuButton>
        <MenuButton>
          <svg width="11" height="11" viewBox="0 0 11 11"><path d="M.500 10C0 3 2 .500 5.500.500S11 3 10.500 10l-3 .500C8 7 8 4 5.500 4S3 7 3.500 10.500z" fill="#24479c" /></svg>
          Marty Lawrence
          <Caret />
        </MenuButton>
      </Header>
      <Workspace>
        <Rail>
          <Cell label="Feature list" w={19}>{I.tree}</Cell>
          <Cell label="Insert" w={19}>{I.insert}</Cell>
          <Cell label="Comments" w={19}><FaComment size={10} color="#222" /></Cell>
          <Cell label="Versions" w={19}><Timer size={10} color="#333" /></Cell>
          <Spacer />
          <Cell label="Tab manager" w={19}>{I.zoomTree}</Cell>
        </Rail>
        <Stage>
          <Toolbar>
            <Cell label="Undo" w={17}>{I.undo}</Cell>
            <Cell label="Redo" w={17}>{I.redo}</Cell>
            <Sep />
            <SketchButton>{I.pencil}Sketch</SketchButton>
            <Sep />
            <Tools items={toolbar} />
            <Cell label="Variable" w={17}><VarIcon /></Cell>
            <Tools items={toolbarEnd} />
            <ToolSearch>Search tools... <kbd>alt</kbd><kbd>C</kbd></ToolSearch>
          </Toolbar>
          <Middle>
            <Panel>
              <PanelHead>
                <h2>Features (18)</h2>
                <Cell label="New folder" w={15}><FolderPlus size={10} strokeWidth={1.5} /></Cell>
                <Cell label="Regeneration times" w={15}><Timer size={10} color="#222" /></Cell>
              </PanelHead>
              <Filter>
                {I.funnel}
                <input aria-label="Filter features" placeholder="Filter by name or type" />
              </Filter>
              <Row $gap={2}><ChevronDown size={8} strokeWidth={3} />Default geometry</Row>
              <Tree $nested>
                <li><Row $dim $indent={4} $gap={0}>{I.origin}Origin</Row></li>
                {["Top", "Front", "Right"].map((n) => (
                  <li key={n}><Row $dim $indent={6}><Faded $on><G s={8} c="#444"><path d="M1 1h5.500v1.500H11V11L1 9.500z" fill="#ddd" /><path d="M4 4h4v4H4z" /></G></Faded>{n}</Row></li>
                ))}
              </Tree>
              <Tree>
                {features.map(([icon, name, dim]) => (
                  <li key={name}>
                    <Row $dim={dim} $indent={1} $gap={1}>
                      <Faded $on={dim}>{React.cloneElement(I[icon], { s: 10 })}</Faded>
                      {name}
                    </Row>
                  </li>
                ))}
              </Tree>
              <Rollback />
              <Spacer />
              <PartsSection>
                <Row $gap={2}><ChevronDown size={8} strokeWidth={3} />Parts (4)</Row>
                <Tree $nested>
                  {["Side 1", "End 1", "End 2", "Side 2"].map((n) => (
                    <li key={n}><Row $indent={6}>{n}</Row></li>
                  ))}
                </Tree>
              </PartsSection>
            </Panel>
            <Canvas>
              <BoxModel />
              <ListToggle aria-label="Toggle list">{React.cloneElement(I.list, { s: 11 })}</ListToggle>
              <CubeHolder><ViewCube /></CubeHolder>
              <SideTabs>
                <Cell label="Appearance"><G><circle cx="6" cy="3.500" r="2.800" fill="#777" stroke="none" /><circle cx="3.500" cy="7.800" r="3" fill="#24479c" stroke="none" /><circle cx="8.500" cy="7.800" r="2.600" fill="#fff" /></G></Cell>
                <Cell label="Configurations"><G><path d="M1 1.500h6v4.500H1z" fill="#8aa6cf" stroke="#5a7db5" /><path d="m4 6 3-1.500L10.500 6v3.500L7 11 4 9.500zM4 6l3 1.300L10.500 6M7 7.300V11" fill="#fff" stroke="#456" /></G></Cell>
                <Cell label="Configured features"><G><path d="M1 1.500h6v3H1z" fill="#777" /><path d="M3 5c-1 2-1 4 0 6M10 3.500c1.200 2.500 1.200 5 0 7.500M5 6.500l2-1 2 1V9l-2 1-2-1zM5 6.500l2 1 2-1M7 7.500V10" /></G></Cell>
                <Cell label="Variables"><G><path d="M1 1h6v3H1z" fill="#777" stroke="none" /><path d="M2.500 4.500c-1 2-1 4 0 6M9.800 3c1.200 2.500 1.200 5 0 7.500M4.500 5l3.500 4.500M8 5 4.500 9.500" stroke="#222" strokeWidth="1.100" /></G></Cell>
              </SideTabs>
              <Measures>
                <G s={10} c="#555"><path d="m1 8 2-3h7l1 3-1.500 1.500H2zM5 5V3h3l2 2" fill="#ccc" /></G>
                <G s={10} c="#333"><path d="M1 9.500h10M6 2v6M2 4h8M1 7h3M8 7h3" strokeWidth="1.200" /></G>
              </Measures>
              <Drawer aria-label="Open drawer"><ChevronLeft size={7} /></Drawer>
            </Canvas>
          </Middle>
          <SheetTabs>
            <Cell label="Add tab" w={19}><Plus size={12} color="#444" /></Cell>
            <SheetTab $w={99} $active>{React.cloneElement(I.studio, { s: 10 })}Pencil box</SheetTab>
            <SheetTab $w={100}>{React.cloneElement(I.assembly, { s: 10 })}Assembly 1</SheetTab>
          </SheetTabs>
        </Stage>
      </Workspace>
      <Taskbar>
        <Cell label="Start" w={24} c="#fff"><FaWindows size={9} /></Cell>
        <TaskSearch>
          <MirroredSearch size={8} />
          <input aria-label="Search Windows" placeholder="Type here to search" />
        </TaskSearch>
        <Apps>
          {taskApps.map(([name, icon, open, active]) => (
            <AppButton key={name} aria-label={name} $open={open} $active={active}>{icon}</AppButton>
          ))}
        </Apps>
        <Spacer />
        <Weather>
          <svg width="10" height="10" viewBox="0 0 10 10"><circle cx="5" cy="5" r="4.800" fill="#f5a623" /><circle cx="4.500" cy="4" r="3" fill="#fbc04d" /></svg>
          20°C  Sunny
        </Weather>
        <Cell label="Hidden icons" w={12} c="#eee"><ChevronUp size={8} /></Cell>
        <Cell label="Backup" w={12} c="#eee"><FaCloudUploadAlt size={9} /></Cell>
        <Cell label="OneDrive" w={12} c="#ccc"><FaCloud size={9} /></Cell>
        <Cell label="Network" w={12} c="#eee"><Monitor size={9} /></Cell>
        <Cell label="Volume" w={12} c="#eee"><Volume2 size={9} /></Cell>
        <Cell label="Dropbox" w={12} c="#eee"><FaDropbox size={9} /></Cell>
        <Cell label="Input language" w={18} c="#eee">ENG</Cell>
        <Clock>3:05 PM<br />15/08/2021</Clock>
        <Cell label="Notifications" w={17} c="#eee">
          <svg width="13" height="13" viewBox="0 0 13 13"><path d="M1 1h9v7H5.500L3.500 10V8H1z" fill="#eee" /><path d="M2.500 3h6M2.500 5h6" stroke="#333" strokeWidth=".8" /><circle cx="9" cy="9" r="3.500" fill="#333" stroke="#999" strokeWidth=".6" /><path d="m8.300 8 .9-.7V11" stroke="#fff" strokeWidth=".8" fill="none" /></svg>
        </Cell>
        <Cell label="Show desktop" w={7}><Thin /></Cell>
      </Taskbar>
    </Page>
  );
}
